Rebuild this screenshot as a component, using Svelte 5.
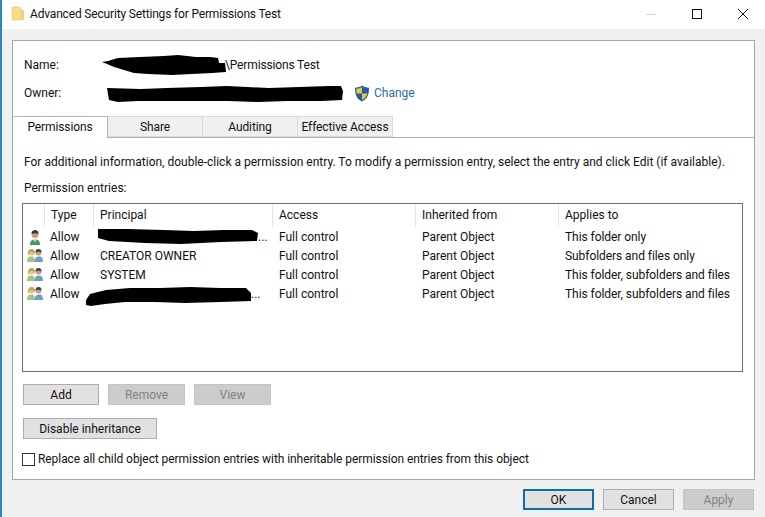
<script>
	const columns = ['Type', 'Principal', 'Access', 'Inherited from', 'Applies to'];
	const entries = [
		{ icon: 'user', principal: '', ellipsis: true, applies: 'This folder only' },
		{ icon: 'group', principal: 'CREATOR OWNER', applies: 'Subfolders and files only' },
		{ icon: 'group', principal: 'SYSTEM', applies: 'This folder, subfolders and files' },
		{ icon: 'group', principal: '', ellipsis: true, applies: 'This folder, subfolders and files' }
	];
	const tabs = ['Permissions', 'Share', 'Auditing', 'Effective Access'];
</script>

<div class="window">
	<header class="titlebar">
		<svg class="folder" width="14" height="15" viewBox="0 0 14 15">
			<path d="M1 1h7l1 1h1v12H1z" fill="#f8dd85" stroke="#e6c468" stroke-width="0.6" />
			<path d="M10 3.500l3 1V14h-3z" fill="#f3cf6e" />
		</svg>
		<span class="title">Advanced Security Settings for Permissions Test</span>
		<div class="controls">
			<svg width="12" height="12" viewBox="0 0 12 12"><path d="M1 6.500h10" stroke="#d4d4d4" /></svg>
			<svg width="12" height="12" viewBox="0 0 12 12"><rect x="1.500" y="1.500" width="9" height="9" fill="none" stroke="#111" /></svg>
			<svg width="12" height="12" viewBox="0 0 12 12"><path d="M1 1l10 10M11 1L1 11" stroke="#111" /></svg>
		</div>
	</header>

	<main class="panel">
		<div class="info">
			<div class="info-row">
				<span class="label">Name:</span>
				<svg class="scribble" width="124" height="20" viewBox="0 0 124 20">
					<path d="M0 7l6-1 10-3 22-1 24-1 14-1 18 2 14 0 8 1 1 5 6 0 1 9-14 1-20 1-20 1-24-1-14-1-10-3-10-3-7-3z" fill="#000" />
				</svg>
				<span class="path">\Permissions Test</span>
			</div>
			<div class="info-row">
				<span class="label owner-label">Owner:</span>
				<svg class="scribble" width="238" height="18" viewBox="0 0 238 18">
					<path d="M1 4l34 1 26-1 34-1 26-1 20 1 22 1 30-1 30-1 12 0 2 5-1 9-20 1-34 0-30 1-30-1-34 0-26 0-30 0-20 1-9-2z" fill="#000" />
				</svg>
				<svg class="shield" width="16" height="17" viewBox="0 0 16 17">
					<path d="M8 .5c2 1.500 4 2 7 2.200 0 6-1 10.800-7 13.800C2 13.500 1 8.700 1 2.700 4 2.500 6 2 8 .5z" fill="#1f5f9e" />
					<path d="M8 2v6.500H2.600C2.400 7 2.300 5.500 2.300 3.800 4.600 3.600 6.400 3.100 8 2zM8 8.500h5.400C13 11 11.200 13.400 8 15z" fill="#f0c04c" />
				</svg>
				<span class="link">Change</span>
			</div>
		</div>

		<div class="tabs">
			{#each tabs as tab, i}
				<div class="tab" class:active={i === 0}>{tab}</div>
			{/each}
		</div>

		<div class="content">
			<p class="hint">For additional information, double-click a permission entry. To modify a permission entry, select the entry and click Edit (if available).</p>
			<p class="entries-label">Permission entries:</p>

			<div class="list">
				<div class="row head">
					<div class="cell icon-cell"></div>
					{#each columns as col}
						<div class="cell">{col}</div>
					{/each}
				</div>
				{#each entries as entry, i}
					<div class="row">
						<div class="cell icon-cell">
							{#if entry.icon === 'user'}
								<svg width="16" height="16" viewBox="0 0 16 16">
									<path d="M3 16c0-4 1.500-5.500 5-5.500s5 1.500 5 5.500z" fill="#3f9a68" />
									<path d="M6.500 10.500h3L8 13z" fill="#e8efe9" />
									<circle cx="8" cy="5.500" r="3.500" fill="#c99c78" />
									<path d="M4.500 5C4.500 2 6 1 8 1s3.500 1 3.500 4C9.500 4 7 4 4.500 5z" fill="#3a3a34" />
								</svg>
							{:else}
								<svg class="group-icon" width="16" height="14" viewBox="0 0 16 14">
									<path d="M0 14c0-3.500 1-5.500 4-5.500S8 10.500 8 14z" fill="#a8c47a" />
									<circle cx="4.500" cy="4.500" r="3" fill="#e3c48e" />
									<path d="M1 8C.5 2.500 2.500 1 4.500 1s4 1.500 3.500 6C7.500 3.500 3 3.500 2.500 5z" fill="#b9a760" />
									<path d="M7.500 14c0-3.500 1.500-5.500 4.500-5.500s4 2 4 5.500z" fill="#6f9fc9" />
									<circle cx="11.500" cy="4.500" r="3" fill="#c99c78" />
									<path d="M8.500 4.500C8.500 2 9.500 1 11.500 1s3 1 3 3.500C13 3.500 10.500 3.500 8.500 4.500z" fill="#3b4450" />
								</svg>
							{/if}
						</div>
						<div class="cell">Allow</div>
						<div class="cell principal">
							{#if entry.ellipsis}
								{#if i === 3}
									<svg class="blot wide" width="166" height="20" viewBox="0 0 166 20">
										<path d="M0 13l4-6 16-4 24-2 30 0 30-1 30 1 26 0 5 5 0 8-30 1-36 1-30-1-30 0-20 2-14 2-5-1z" fill="#000" />
									</svg>
								{:else}
									<svg class="blot" width="161" height="17" viewBox="0 0 161 17">
										<path d="M0 1l30 0 36 1 30 1 30-1 28 0 6 3-1 8-36 1-40 2-36-1-36-2-11-3z" fill="#000" />
									</svg>
								{/if}
								<span class="dots">...</span>
							{:else}
								{entry.principal}
							{/if}
						</div>
						<div class="cell">Full control</div>
						<div class="cell">Parent Object</div>
						<div class="cell applies">{entry.applies}</div>
					</div>
				{/each}
			</div>

			<div class="actions">
				<button class="add">Add</button>
				<button class="off">Remove</button>
				<button class="off">View</button>
			</div>
			<button class="disable">Disable inheritance</button>
			<div class="replace">
				<span class="check"></span>
				<span class="replace-text">Replace all child object permission entries with inheritable permission entries from this object</span>
			</div>
		</div>
	</main>

	<footer class="footer">
		<button class="primary">OK</button>
		<button>Cancel</button>
		<button class="off">Apply</button>
	</footer>
</div>

<style>
	:global(body) {
		margin: 0;
	}

	.window {
		box-sizing: border-box;
		width: 765px;
		height: 517px;
		overflow: hidden;
		background: #f0f0f0;
		border-left: 2px solid #2b86c5;
		color: #111;
		font-family: Roboto, 'Noto Sans', sans-serif;
		font-size: 12px;
		line-height: 16px;
	}

	.titlebar {
		display: flex;
		align-items: center;
		box-sizing: border-box;
		height: 29px;
		background: #fff;
		padding: 0 0 2px 9px;
	}
	.folder {
		margin-right: 5px;
	}
	.title {
		flex: 1;
		letter-spacing: -0.17px;
	}
	.controls {
		display: flex;
		gap: 34px;
		padding-right: 16px;
	}

	.panel {
		box-sizing: border-box;
		width: 743px;
		height: 440px;
		margin: 11px 0 0 10px;
		background: #fff;
		border: 1px solid #a6a6a6;
	}

	.info {
		height: 75px;
		padding: 10px 0 0 11px;
		box-sizing: border-box;
	}
	.info-row {
		display: flex;
		align-items: center;
		height: 28px;
	}
	.label {
		width: 78px;
	}
	.owner-label {
		width: 82px;
	}
	.scribble {
		flex: none;
	}
	.path {
		margin-left: -1px;
		letter-spacing: -0.15px;
	}
	.shield {
		margin: 0 4px 0 10px;
	}
	.link {
		color: #2a6ea8;
	}

	.tabs {
		display: flex;
		height: 22px;
		box-sizing: border-box;
		border-bottom: 1px solid #b4b4b4;
	}
	.tab {
		box-sizing: border-box;
		width: 95px;
		height: 21px;
		text-align: center;
		line-height: 20px;
		letter-spacing: -0.1px;
		background: #f0f0f0;
		border: 1px solid #d9d9d9;
		border-left: 0;
	}
	.tab.active {
		height: 22px;
		background: #fff;
		border-color: #b4b4b4;
		border-bottom: 0;
	}

	.content {
		padding: 0 11px 0 9px;
	}
	.hint {
		margin: 16px 0 0 2px;
		white-space: nowrap;
	}
	.entries-label {
		margin: 10px 0 0 2px;
	}

	.list {
		box-sizing: border-box;
		height: 169px;
		margin-top: 7px;
		border: 1px solid #6d6d6d;
	}
	.row {
		display: grid;
		grid-template-columns: 21px 49px 179px 143px 143px 1fr;
		height: 19px;
		align-items: center;
	}
	.row.head {
		height: 23px;
	}
	.head .cell {
		height: 23px;
		line-height: 22px;
		padding-left: 6px;
		border-left: 1px solid #e5e5e5;
	}
	.head .cell:first-child {
		border-left: 0;
	}
	.cell {
		box-sizing: border-box;
		padding-left: 7px;
		white-space: nowrap;
	}
	.cell:nth-child(2) {
		padding-left: 6px;
	}
	.applies {
		letter-spacing: -0.06px;
	}
	.icon-cell {
		display: flex;
		padding-left: 4px;
	}
	.group-icon {
		margin-top: -2px;
	}
	.principal {
		display: flex;
		align-items: center;
		height: 16px;
	}
	.blot {
		flex: none;
		margin-left: -2px;
	}
	.blot.wide {
		margin: 6px 0 0 -14px;
	}
	.dots {
		margin-left: -1px;
	}

	.actions {
		display: flex;
		gap: 9px;
		margin: 12px 0 0 1px;
	}
	button {
		box-sizing: border-box;
		width: 77px;
		height: 21px;
		padding: 0;
		background: #e1e1e1;
		border: 1px solid #adadad;
		color: #111;
		font: inherit;
	}
	button.add {
		width: 76px;
	}
	button.off {
		background: #cccccc;
		border-color: #c4c4c4;
		color: #838383;
	}
	.disable {
		display: block;
		width: 134px;
		margin: 13px 0 0 1px;
	}

	.replace {
		display: flex;
		align-items: center;
		gap: 3px;
		height: 14px;
		margin-top: 13px;
	}
	.replace-text {
		letter-spacing: -0.07px;
	}
	.check {
		box-sizing: border-box;
		width: 13px;
		height: 13px;
		background: #fff;
		border: 1px solid #333;
	}

	.footer {
		display: flex;
		justify-content: flex-end;
		gap: 9px;
		margin-top: 9px;
		padding-right: 11px;
	}
	.footer button {
		width: 71px;
	}
	.footer .primary {
		border: 2px solid #0f6cb0;
	}
</style>
